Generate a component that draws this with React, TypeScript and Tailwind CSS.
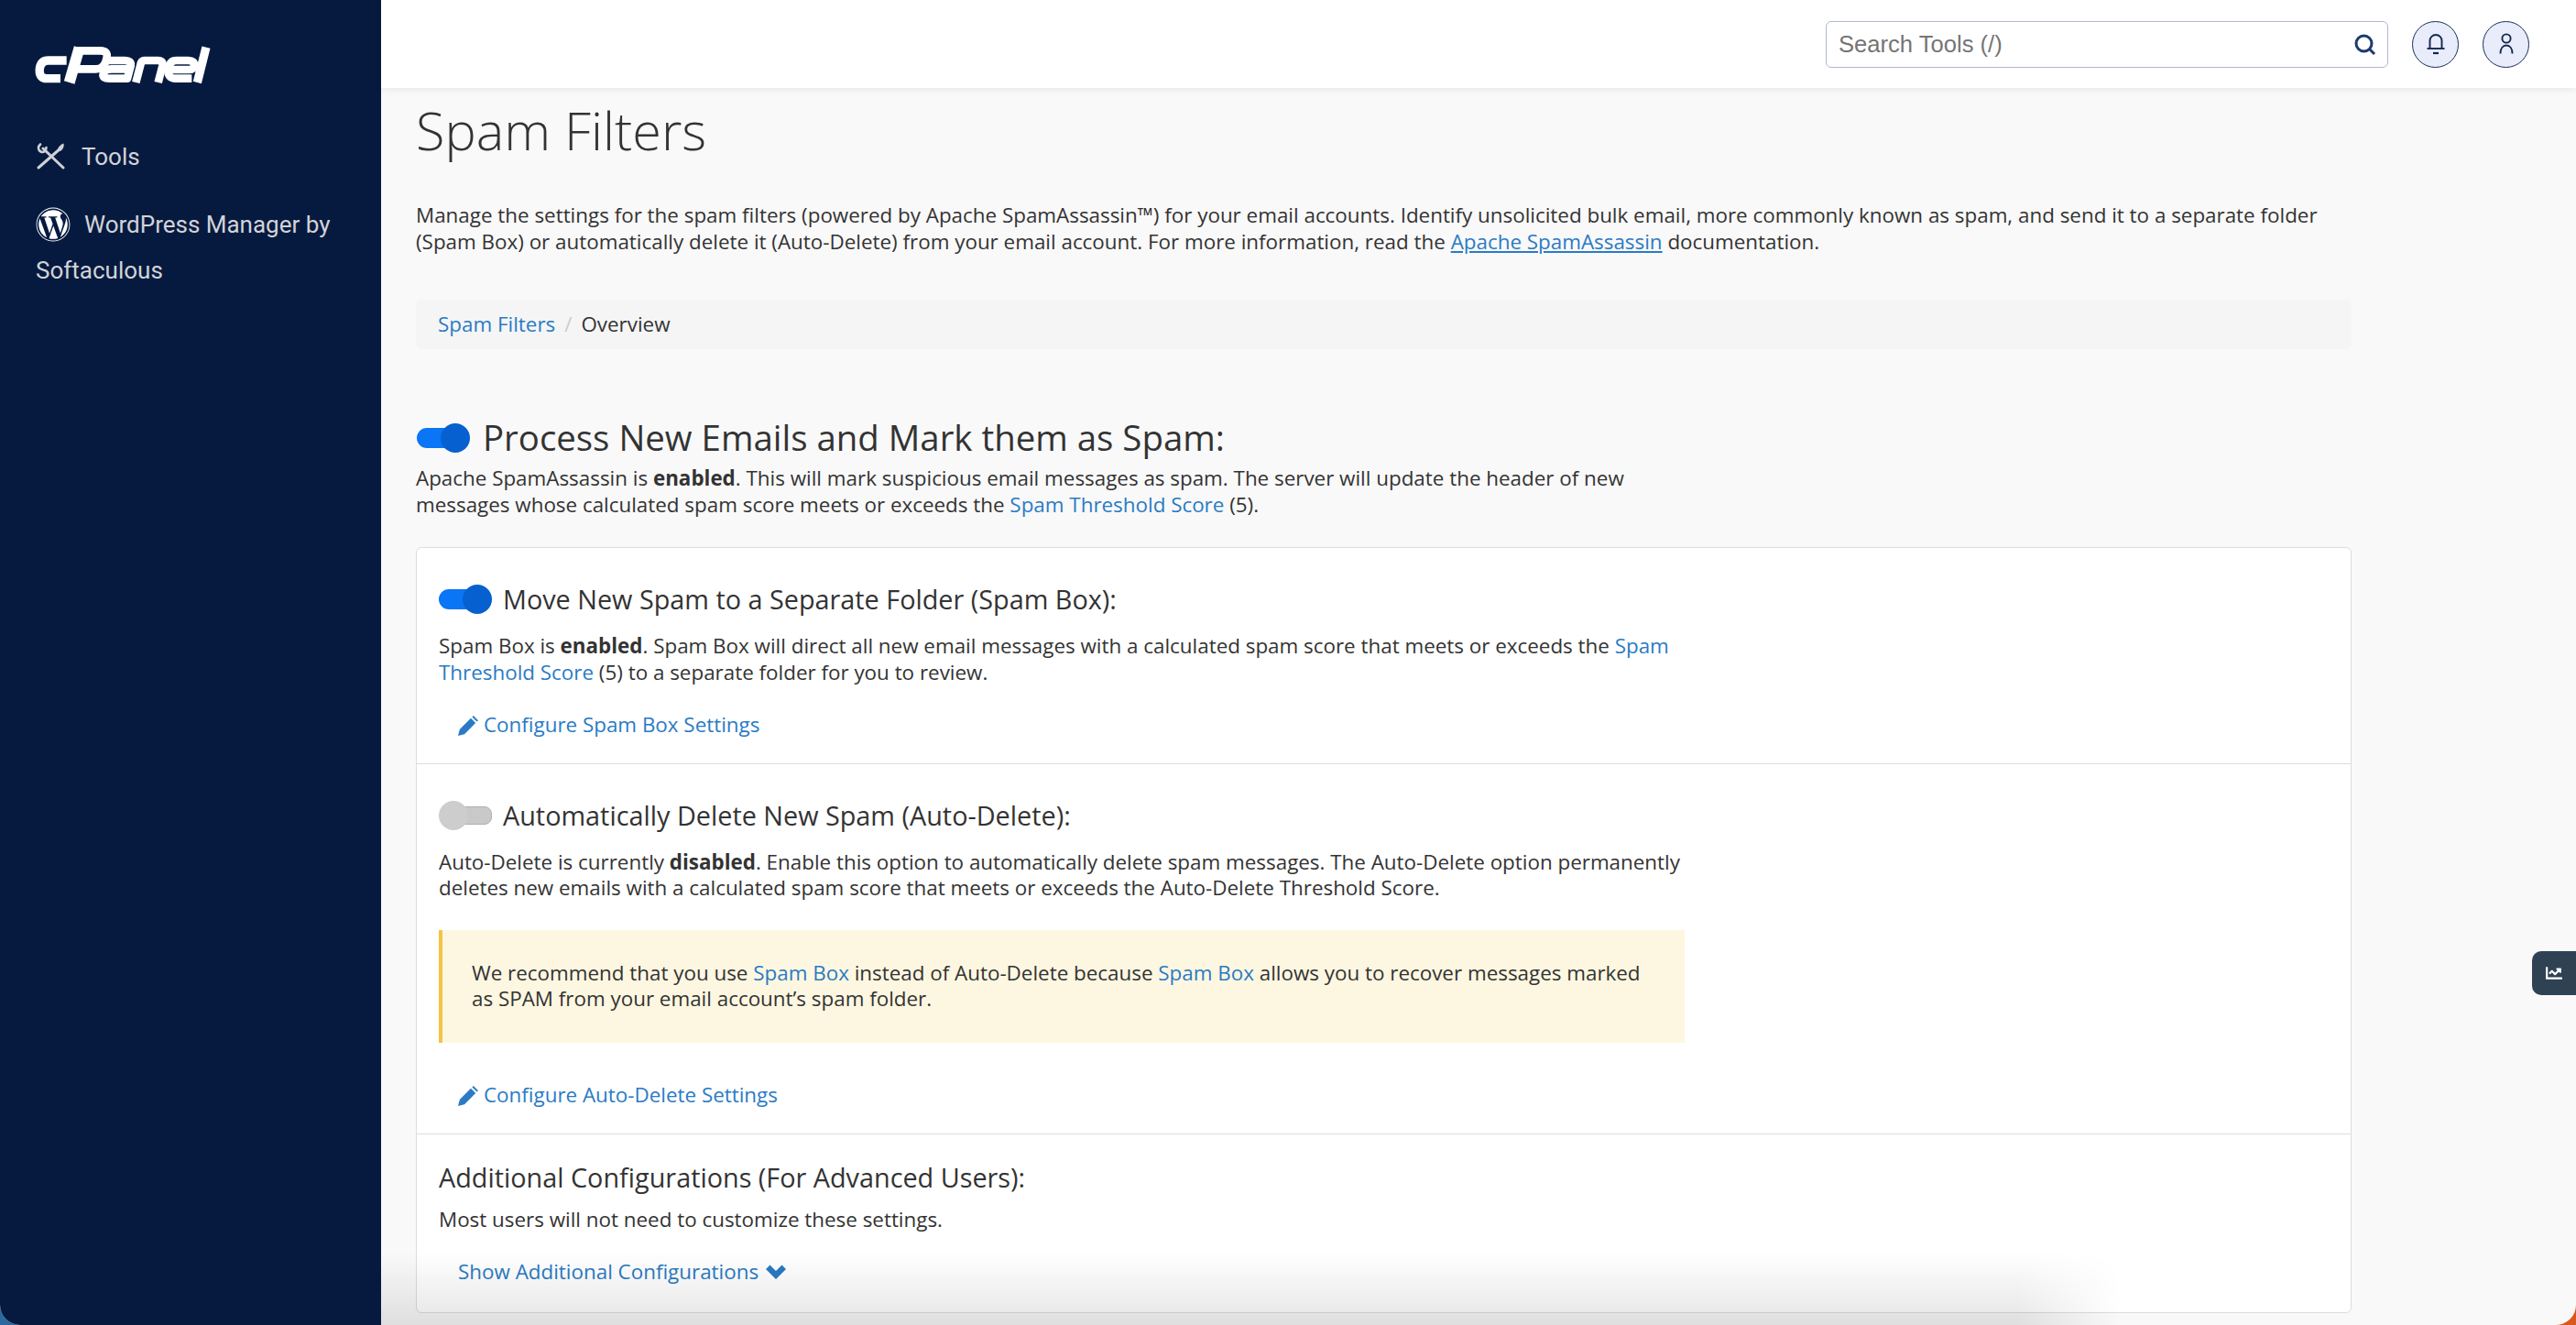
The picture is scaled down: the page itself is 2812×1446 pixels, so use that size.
import React from "react";
import { FaWordpress, FaChartLine } from "react-icons/fa";

const A = ({ children, u }: { children: React.ReactNode; u?: boolean }) => (
  <a className={`text-[#2a7bc4] ${u ? "underline" : ""}`}>{children}</a>
);

const Toggle = ({ on, className }: { on: boolean; className?: string }) => (
  <div className={`relative w-[58px] h-[32px] shrink-0 ${className ?? ""}`}>
    {on ? (
      <>
        <div className="absolute left-0 right-[16px] top-[5px] h-[22px] rounded-l-full bg-[#0a75f5]" />
        <div className="absolute right-0 top-0 w-[32px] h-[32px] rounded-full bg-[#0760cf]" />
      </>
    ) : (
      <>
        <div className="absolute left-[16px] right-0 top-[6px] h-[20px] rounded-r-[8px] bg-[#c9c9c9] border border-[#b0b0b0]" />
        <div className="absolute left-0 top-0 w-[32px] h-[32px] rounded-full bg-[#cdcdcd]" />
      </>
    )}
  </div>
);

const Pencil = () => (
  <svg width="22" height="22" viewBox="0 0 22 22" className="shrink-0">
    <path d="M0 22l1.8-7L14 2.8l5.2 5.2L7 20.2z" fill="#2a7bc4" />
    <path d="M15.4 1.4L16.8 0 22 5.2l-1.4 1.4z" fill="#2a7bc4" />
  </svg>
);

const EditLink = ({ children, mt }: { children: React.ReactNode; mt: string }) => (
  <div className={`flex items-center h-[32px] pl-[21px] gap-[6px] text-[#2a7bc4] ${mt}`}>
    <Pencil />
    <span>{children}</span>
  </div>
);

const Logo = () => (
  <svg width="210" height="60" viewBox="0 0 630 180" className="block -ml-[9px]">
    <g fill="none" stroke="#fff" strokeWidth="26" strokeLinejoin="round" strokeLinecap="butt">
      <path d="M128 78H68Q44 78 40 104Q36 137 64 137H108" strokeWidth="28" />
      <path d="M160 46H238Q266 46 259 72Q252 106 224 106H158" />
      <path d="M170 36L137 150" strokeWidth="36" />
      <path d="M262 78H318Q342 78 338 96L327 137H268Q244 137 248 122Q252 106 275 106H334" />
      <path d="M355 150L372 85Q375 78 385 78H427Q446 78 442 96L428 150" />
      <path d="M464 108H530Q544 108 546 95Q548 78 527 78H487Q466 78 462 105Q456 137 486 137H538" />
      <path d="M585 35L556 150" strokeWidth="28" />
    </g>
  </svg>
);

const ToolsIcon = () => (
  <svg width="32" height="30" viewBox="0 0 32 30" className="shrink-0">
    <g fill="none" stroke="#cfd1d6" strokeLinecap="round">
      <path d="M8 6L30 27" strokeWidth="3" />
      <path d="M5 1.5C2 4 2.5 8 5.5 9.5C8.5 11 11.5 8.5 11.5 5" strokeWidth="2.6" />
      <path d="M27 6L3 27" strokeWidth="3" />
    </g>
    <path d="M30.5 0.5C31.5 4 29 8.5 26 9L24 7C24.5 4.5 27.5 1.5 30.5 0.5z" fill="#cfd1d6" />
  </svg>
);

const Round = ({ children }: { children: React.ReactNode }) => (
  <button className="w-[51px] h-[51px] rounded-full bg-[#e9ecfb] border-[1.5px] border-[#1b2f57] flex items-center justify-center">
    {children}
  </button>
);

export default function App() {
  return (
    <div className="relative w-[2812px] h-[1446px] overflow-hidden bg-[linear-gradient(to_right,#2a6aa0_0%,#2a6aa0_50%,#d9581a_50%,#d9581a_100%)]">
      <div className="relative flex w-full h-full overflow-hidden rounded-b-[22px] bg-[#f9f9f9] font-['Open_Sans',sans-serif] text-[22.4px] leading-[28.6px] text-[#333]">
        <aside className="w-[416px] shrink-0 h-full bg-[#061a40] pl-[39px] pr-[24px] font-['Roboto',sans-serif] text-[26px] leading-[50px] text-[#d2d3d7]">
          <div className="pt-[40px]">
            <Logo />
          </div>
          <div className="mt-[46px] flex items-center gap-[18px] h-[50px]">
            <ToolsIcon />
            <span>Tools</span>
          </div>
          <div className="mt-[24px]">
            <FaWordpress className="inline-block w-[38px] h-[38px] text-white align-middle mr-[15px] -mt-[4px]" />
            WordPress Manager by Softaculous
          </div>
        </aside>

        <main className="flex-1 min-w-0 h-full flex flex-col">
          <header className="relative z-10 h-[96px] shrink-0 bg-white shadow-[0_2px_8px_rgba(0,0,0,0.07)] flex items-center justify-end pr-[51px] gap-[26px]">
            <div className="relative w-[614px] h-[51px]">
              <input
                placeholder="Search Tools (/)"
                readOnly
                className="w-full h-full rounded-[6px] border-[1.5px] border-[#afb8d0] bg-white pl-[13px] pr-[44px] font-['Liberation_Sans',sans-serif] text-[25.6px] text-[#757575] placeholder:text-[#757575] outline-none"
              />
              <svg width="24" height="24" viewBox="0 0 24 24" className="absolute right-[13px] top-[14px]">
                <circle cx="10.5" cy="10.5" r="8.5" fill="none" stroke="#1a3a70" strokeWidth="3" />
                <path d="M16.5 16.5L22 22" stroke="#1a3a70" strokeWidth="3" />
              </svg>
            </div>
            <Round>
              <svg width="20" height="24" viewBox="0 0 20 24">
                <g fill="none" stroke="#14274e" strokeWidth="1.9">
                  <path d="M3.5 16V8.5a6.5 6.5 0 0 1 13 0V16" />
                  <path d="M0.5 17h19" />
                  <path d="M7 22h6" strokeWidth="2.2" />
                </g>
              </svg>
            </Round>
            <Round>
              <svg width="20" height="24" viewBox="0 0 20 24">
                <g fill="none" stroke="#14274e" strokeWidth="1.9">
                  <circle cx="10" cy="6" r="4.6" />
                  <path d="M3.5 22.5C3.5 17 6 13.5 10 13.5S16.5 17 16.5 22.5" />
                </g>
              </svg>
            </Round>
          </header>

          <div className="pl-[38px] w-[2151px]">
            <h1 className="pt-[14px] font-light text-[57.6px] leading-[64px]">Spam Filters</h1>
            <p className="mt-[47px]">
              Manage the settings for the spam filters (powered by Apache SpamAssassin™) for your email accounts. Identify unsolicited bulk email, more commonly known as spam, and send it to a separate folder (Spam Box) or automatically delete it (Auto-Delete) from your email account. For more information, read the <A u>Apache SpamAssassin</A> documentation.
            </p>

            <nav className="mt-[49px] h-[54px] rounded-[6px] bg-[#f5f5f5] px-[24px] flex items-center">
              <A>Spam Filters</A>
              <span className="text-[#ccc] px-[10px]">/</span>
              <span>Overview</span>
            </nav>

            <div className="mt-[81px] flex items-center gap-[14px] h-[32px]">
              <Toggle on className="ml-[1px]" />
              <h2 className="text-[38.4px] leading-[32px] font-normal -translate-y-[1px]">Process New Emails and Mark them as Spam:</h2>
            </div>
            <p className="mt-[14px] w-[1360px]">
              Apache SpamAssassin is <b>enabled</b>. This will mark suspicious email messages as spam. The server will update the header of new messages whose calculated spam score meets or exceeds the <A>Spam Threshold Score</A> (5).
            </p>

            <section className="mt-[32px] bg-white border border-[#ddd] rounded-[6px]">
              <div className="pt-[40px] pb-[25px] px-[24px] border-b border-[#ddd]">
                <div className="flex items-center gap-[12px] h-[32px]">
                  <Toggle on />
                  <h3 className="text-[28.8px] leading-[32px] font-normal">Move New Spam to a Separate Folder (Spam Box):</h3>
                </div>
                <p className="mt-[21px] w-[1360px]">
                  Spam Box is <b>enabled</b>. Spam Box will direct all new email messages with a calculated spam score that meets or exceeds the <A>Spam Threshold Score</A> (5) to a separate folder for you to review.
                </p>
                <EditLink mt="mt-[27px]">Configure Spam Box Settings</EditLink>
              </div>

              <div className="pt-[40px] pb-[25px] px-[24px] border-b border-[#ddd]">
                <div className="flex items-center gap-[12px] h-[32px]">
                  <Toggle on={false} />
                  <h3 className="text-[28.8px] leading-[32px] font-normal">Automatically Delete New Spam (Auto-Delete):</h3>
                </div>
                <p className="mt-[21px] w-[1360px]">
                  Auto-Delete is currently <b>disabled</b>. Enable this option to automatically delete spam messages. The Auto-Delete option permanently deletes new emails with a calculated spam score that meets or exceeds the Auto-Delete Threshold Score.
                </p>
                <div className="mt-[31px] w-[1360px] h-[123px] bg-[#fdf7e1] border-l-[4px] border-[#f6c344] pl-[32px] pr-[40px] flex items-center">
                  <p>
                    We recommend that you use <A>Spam Box</A> instead of Auto-Delete because <A>Spam Box</A> allows you to recover messages marked as SPAM from your email account’s spam folder.
                  </p>
                </div>
                <EditLink mt="mt-[42px]">Configure Auto-Delete Settings</EditLink>
              </div>

              <div className="pt-[31px] pb-[28px] px-[24px]">
                <h3 className="text-[28.8px] leading-[32px] font-normal">Additional Configurations (For Advanced Users):</h3>
                <p className="mt-[16px]">Most users will not need to customize these settings.</p>
                <div className="mt-[27px] h-[32px] pl-[21px] flex items-center gap-[8px] text-[#2a7bc4]">
                  <span>Show Additional Configurations</span>
                  <svg width="22" height="16" viewBox="0 0 22 16" className="shrink-0">
                    <path d="M0 5L4.5 0.5L11 7L17.5 0.5L22 5L11 16z" fill="#2a7bc4" />
                  </svg>
                </div>
              </div>
            </section>
          </div>
        </main>

        <div className="absolute right-0 top-[1038px] w-[48px] h-[48px] rounded-l-[10px] bg-[#2f4254] flex items-center justify-start pl-[15px]">
          <FaChartLine className="w-[18px] h-[18px] text-white" />
        </div>
        <div className="absolute left-[416px] bottom-0 w-[1900px] h-[80px] pointer-events-none bg-[linear-gradient(to_bottom,rgba(0,0,0,0),rgba(0,0,0,0.1))] [mask-image:linear-gradient(to_right,black_94%,transparent)]" />
      </div>
    </div>
  );
}
